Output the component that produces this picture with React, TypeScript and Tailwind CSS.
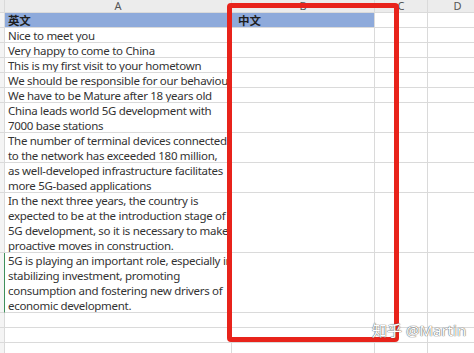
import type { ReactNode } from 'react'

interface Row {
  h: string
  a?: string[]
  b?: string
  head?: boolean
  mark?: boolean
}

// строки листа: высота и текст ячейки A
const rows: Row[] = [
  { h: 'h-[15px]', a: ['英文'], b: '中文', head: true },
  { h: 'h-[15px]', a: ['Nice to meet you'] },
  { h: 'h-[15px]', a: ['Very happy to come to China'] },
  { h: 'h-[15px]', a: ['This is my first visit to your hometown'] },
  { h: 'h-[15px]', a: ['We should be responsible for our behavious'] },
  { h: 'h-[15px]', a: ['We have to be Mature after 18 years old'] },
  { h: 'h-[30px]', a: ['China leads world 5G development with', '7000 base stations'] },
  { h: 'h-[30px]', a: ['The number of terminal devices connected', 'to the network has exceeded 180 million,'] },
  { h: 'h-[30px]', a: ['as well-developed infrastructure facilitates', 'more 5G-based applications'] },
  {
    h: 'h-[60px]',
    a: [
      'In the next three years, the country is',
      'expected to be at the introduction stage of',
      '5G development, so it is necessary to make',
      'proactive moves in construction.',
    ],
  },
  {
    h: 'h-[60px]',
    a: [
      '5G is playing an important role, especially in',
      'stabilizing investment, promoting',
      'consumption and fostering new drivers of',
      'economic development.',
    ],
    mark: true,
  },
  { h: 'h-[15px]' },
  { h: 'h-[15px]' },
  { h: 'h-[15px]' },
]

function Cell({ w, className, children }: { w: string; className?: string; children?: ReactNode }) {
  return (
    <div className={`${w} shrink-0 border-r border-b border-[#dadada] overflow-hidden ${className ?? ''}`}>
      {children}
    </div>
  )
}

export default function App() {
  return (
    <div
      className="relative w-[474px] h-[353px] overflow-hidden bg-white text-[#333]"
      style={{ fontFamily: '"Noto Sans", "Noto Sans CJK SC", sans-serif' }}
    >
      {/* Заголовки столбцов */}
      <div className="flex h-[13px] bg-[#ececec] text-[11px] leading-[12px] text-[#555]">
        <Cell w="w-[5px]" />
        <Cell w="w-[227px]" className="text-center">A</Cell>
        <Cell w="w-[143px]" className="text-center">B</Cell>
        <Cell w="w-[53px]" className="text-center">C</Cell>
        <Cell w="w-[60px]" className="text-center">D</Cell>
      </div>

      {/* Строки */}
      {rows.map((r, i) => (
        <div key={i} className={`flex ${r.h} text-[11.5px] leading-[15px]`}>
          <Cell w="w-[5px]" className={r.mark ? 'bg-[#f4f4f4] border-r-[#3f8f5a]' : 'bg-[#f4f4f4]'} />
          <Cell w="w-[227px]" className={r.head ? 'bg-[#8eaadb] pl-[3px] font-semibold text-[#1f1f1f]' : 'pl-[3px]'}>
            {r.a?.map((line, j) => (
              <div key={j} className="h-[15px] whitespace-nowrap tracking-[-0.3px]">
                {line}
              </div>
            ))}
          </Cell>
          <Cell w="w-[143px]" className={r.head ? 'bg-[#8eaadb] pl-[6px] font-semibold text-[#1f1f1f]' : ''}>
            {r.b}
          </Cell>
          <Cell w="w-[53px]" />
          <Cell w="w-[60px]" />
        </div>
      ))}

      {/* Красная рамка поверх столбца B */}
      <div className="absolute left-[227px] top-[3px] w-[172px] h-[339px] border-[5px] border-[#e8231b] rounded-[4px]" />

      {/* Водяной знак */}
      <div
        className="absolute left-[372px] top-[320px] text-[15px] leading-[20px] text-white whitespace-nowrap"
        style={{ textShadow: '0 0 1px #555, 0 0 1px #555' }}
      >
        知乎 @Martin
      </div>
    </div>
  )
}
